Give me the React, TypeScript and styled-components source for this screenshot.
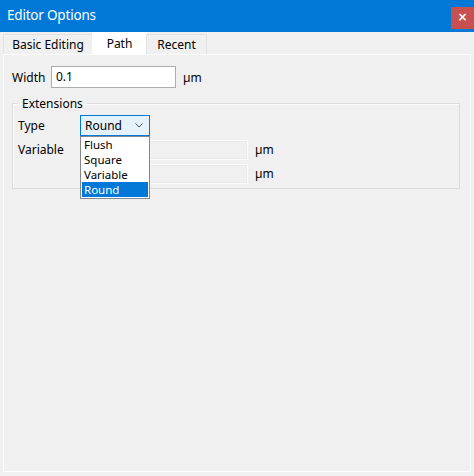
import React from "react";
import styled, { createGlobalStyle } from "styled-components";

const GlobalStyle = createGlobalStyle`
    html, body {
        margin: 0;
        padding: 0;
        background: #f0f0f0;
    }
    body {
        font-family: "Noto Sans", "Liberation Sans", sans-serif;
        font-size: 12px;
        color: #000;
    }
`;

const tabs = [
    { name: "Basic Editing", width: 90 },
    { name: "Path", width: 55 },
    { name: "Recent", width: 61 },
];
const types = ["Flush", "Square", "Variable", "Round"];

export const App = () => {
    return (
        <Window>
            <GlobalStyle />
            <TitleBar>
                <Title>Editor Options</Title>
                <CloseButton>×</CloseButton>
            </TitleBar>
            <TabBar>
                {tabs.map((t) => (
                    <Tab key={t.name} $active={t.name === "Path"} $width={t.width}>
                        {t.name}
                    </Tab>
                ))}
            </TabBar>
            <Pane>
                <WidthRow>
                    <Label>Width</Label>
                    <TextInput $width={125}>0.1</TextInput>
                    <Unit>µm</Unit>
                </WidthRow>
                <GroupBox>
                    <Legend>Extensions</Legend>
                    <FieldRow>
                        <FieldLabel>Type</FieldLabel>
                        <ComboWrap>
                            <Combo>
                                Round
                                <Chevron viewBox="0 0 8 5">
                                    <path d="M0.5 0.5 L4 4 L7.5 0.5" fill="none" stroke="#555" strokeWidth="1" />
                                </Chevron>
                            </Combo>
                            <DropList>
                                {types.map((t) => (
                                    <DropItem key={t} $selected={t === "Round"}>
                                        {t}
                                    </DropItem>
                                ))}
                            </DropList>
                        </ComboWrap>
                    </FieldRow>
                    <FieldRow>
                        <FieldLabel>Variable</FieldLabel>
                        <DisabledInput />
                        <Unit>µm</Unit>
                    </FieldRow>
                    <FieldRow>
                        <FieldLabel />
                        <DisabledInput />
                        <Unit>µm</Unit>
                    </FieldRow>
                </GroupBox>
            </Pane>
        </Window>
    );
};

export default App;

const Window = styled.div`
    display: flex;
    flex-direction: column;
    width: 474px;
    height: 476px;
    background: #f0f0f0;
    overflow: hidden;
`;

const TitleBar = styled.div`
    display: flex;
    align-items: flex-start;
    height: 32px;
    background: #0078d7;
    color: #fff;
    flex-shrink: 0;
`;

const Title = styled.div`
    font-size: 13.5px;
    letter-spacing: -0.2px;
    line-height: 32px;
    padding-left: 7px;
    margin-top: -1px;
`;

const CloseButton = styled.div`
    margin-left: auto;
    margin-top: 7px;
    width: 23px;
    height: 22px;
    background: #c75050;
    color: #fff;
    font-family: "DejaVu Sans", sans-serif;
    font-size: 12px;
    font-weight: bold;
    line-height: 21px;
    text-align: center;
`;

const TabBar = styled.div`
    display: flex;
    align-items: flex-end;
    height: 23px;
    padding-left: 3px;
    margin-bottom: -1px;
    position: relative;
    z-index: 1;
    flex-shrink: 0;
`;

const Tab = styled.div<{ $active?: boolean; $width: number }>`
    box-sizing: border-box;
    width: ${(p) => p.$width}px;
    height: ${(p) => (p.$active ? "23px" : "20px")};
    margin-bottom: ${(p) => (p.$active ? "0" : "1px")};
    line-height: ${(p) => (p.$active ? "21px" : "19px")};
    text-align: center;
    background: ${(p) => (p.$active ? "#ffffff" : "#f0f0f0")};
    border: 1px solid ${(p) => (p.$active ? "#ffffff" : "#e3e3e3")};
    border-bottom: none;
    font-size: 12px;
    margin-right: -1px;
`;

const Pane = styled.div`
    flex: 1;
    margin: 0 3px 4px 3px;
    border: 1px solid #fdfdfd;
    background: #f0f0f0;
    padding: 11px 9px 0 8px;
    display: flex;
    flex-direction: column;
`;

const WidthRow = styled.div`
    display: flex;
    align-items: center;
    height: 22px;
`;

const Label = styled.div`
    width: 39px;
    font-size: 12px;
`;

const TextInput = styled.div<{ $width: number }>`
    box-sizing: border-box;
    width: ${(p) => p.$width}px;
    height: 22px;
    background: #fff;
    border: 1px solid #adadad;
    padding-left: 4px;
    line-height: 20px;
    font-size: 12px;
`;

const Unit = styled.div`
    margin-left: 7px;
    font-size: 12px;
`;

const GroupBox = styled.fieldset`
    margin: 7px 1px 0 0;
    padding: 3px 0 4px 5px;
    border: 1px solid #dcdcdc;
    box-shadow: inset 1px 1px 0 #fbfbfb;
    display: flex;
    flex-direction: column;
    gap: 3px;
`;

const Legend = styled.legend`
    margin-left: 0;
    padding: 0 4px;
    font-size: 12px;
`;

const FieldRow = styled.div`
    display: flex;
    align-items: center;
    height: 21px;
`;

const FieldLabel = styled.div`
    width: 62px;
    font-size: 12px;
`;

const ComboWrap = styled.div`
    position: relative;
`;

const Combo = styled.div`
    box-sizing: border-box;
    width: 70px;
    height: 21px;
    background: #e5f1fb;
    border: 1px solid #0078d7;
    display: flex;
    align-items: center;
    justify-content: space-between;
    padding: 0 6px 0 4px;
    font-size: 12px;
`;

const Chevron = styled.svg`
    width: 8px;
    height: 5px;
`;

const DropList = styled.div`
    position: absolute;
    left: 0;
    top: 21px;
    z-index: 5;
    box-sizing: border-box;
    width: 70px;
    background: #fff;
    border: 1px solid #828790;
    padding: 0 1px 1px 1px;
    display: flex;
    flex-direction: column;
`;

const DropItem = styled.div<{ $selected?: boolean }>`
    height: 15px;
    line-height: 15px;
    padding-left: 2px;
    font-size: 11.5px;
    background: ${(p) => (p.$selected ? "#0078d7" : "transparent")};
    color: ${(p) => (p.$selected ? "#fff" : "#000")};
`;

const DisabledInput = styled.div`
    box-sizing: border-box;
    width: 168px;
    height: 20px;
    background: #f0f0f0;
    border: 1px solid #fbfbfb;
    box-shadow: inset 0 0 0 1px #e9e9e9;
`;
